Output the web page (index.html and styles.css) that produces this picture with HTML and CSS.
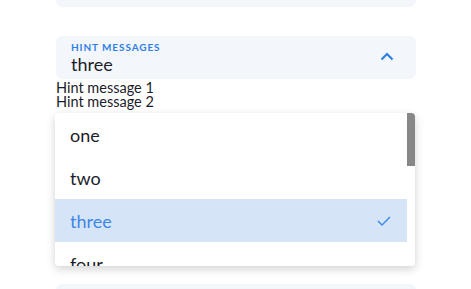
FILE: index.html
```html
<!DOCTYPE html>
<html lang="en">
<head>
  <meta charset="UTF-8">
  <title>Select</title>
  <link rel="stylesheet" href="styles.css">
</head>
<body>
  <div class="page">
    <div class="card card-top"></div>

    <!-- select field -->
    <div class="select">
      <div class="field">
        <div class="field-text">
          <span class="label">Hint messages</span>
          <span class="value">three</span>
        </div>
        <svg class="chevron" width="14" height="9" viewBox="0 0 14 9">
          <path d="M1.5 7.5 L7 2 L12.5 7.5" fill="none" stroke="#2f7fe6" stroke-width="2.2"/>
        </svg>
      </div>
      <div class="hints">
        <div>Hint message 1</div>
        <div>Hint message 2</div>
      </div>

      <!-- dropdown -->
      <div class="dropdown">
        <ul class="listbox">
          <li>one</li>
          <li>two</li>
          <li class="selected">three
            <svg width="14" height="10" viewBox="0 0 14 10">
              <path d="M1 5 L5 9 L13 1" fill="none" stroke="#3d86e8" stroke-width="1.4"/>
            </svg>
          </li>
          <li>four</li>
          <li>five</li>
          <li>six</li>
          <li>seven</li>
          <li>eight</li>
          <li>nine</li>
          <li>ten</li>
        </ul>
        <div class="thumb"></div>
      </div>
    </div>

    <div class="card card-bottom"></div>
  </div>
</body>
</html>
```

FILE: styles.css
```css
body {
  margin: 0;
  background-color: #ffffff;
  font-family: Lato, "Noto Sans", sans-serif;
  color: #1b1d2a;
}

.page {
  width: 360px;
  margin-left: 56px;
}

.card {
  background-color: #f3f6fa;
  border-radius: 6px;
}

.card-top {
  height: 7px;
  border-radius: 0 0 6px 6px;
}

.card-bottom {
  height: 6px;
  margin-top: 175px;
  border-radius: 6px 6px 0 0;
}

/* Select */
.select {
  position: relative;
  margin-top: 29px;
}

.field {
  display: flex;
  align-items: center;
  justify-content: space-between;
  height: 43px;
  box-sizing: border-box;
  padding: 0 22px 0 15px;
  background-color: #f3f6fa;
  border-radius: 6px;
}

.field-text {
  display: flex;
  flex-direction: column;
}

.label {
  font-size: 10px;
  line-height: 12px;
  font-weight: bold;
  letter-spacing: 0.9px;
  text-transform: uppercase;
  color: #2f7fe6;
}

.value {
  font-size: 18px;
  line-height: 22px;
}

.chevron {
  margin-bottom: 3px;
}

.hints {
  font-size: 14.5px;
  line-height: 14px;
  padding-top: 2px;
}

/* Dropdown */
.dropdown {
  position: absolute;
  top: 77px;
  left: -1px;
  width: 360px;
  height: 153px;
  overflow: hidden;
  background-color: #ffffff;
  border-radius: 4px;
  box-shadow: 0 3px 10px rgba(0, 0, 0, 0.18);
}

.listbox {
  margin: 0;
  padding: 0 8px 0 0;
  list-style: none;
}

.listbox li {
  display: flex;
  align-items: center;
  justify-content: space-between;
  height: 43px;
  padding: 0 16px 0 15px;
  font-size: 18px;
}

.listbox li.selected {
  background-color: #d5e5f7;
  color: #3d86e8;
}

.thumb {
  position: absolute;
  top: 0;
  right: 0;
  width: 8px;
  height: 53px;
  background-color: #878787;
}
```
